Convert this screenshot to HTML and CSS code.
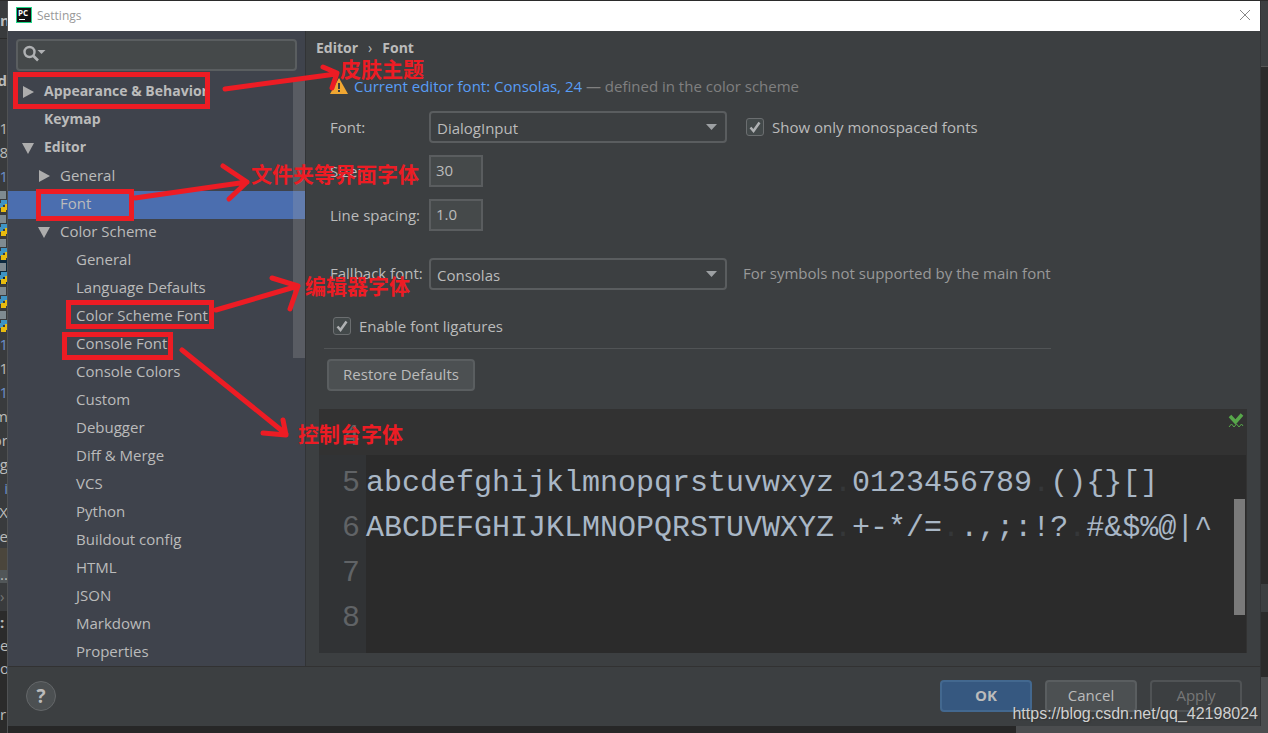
FILE: index.html
```html
<!DOCTYPE html>
<html lang="en">
  <head>
    <meta charset="utf-8">
    <meta name="viewport" content="width=device-width, initial-scale=1.0">
    <title>Settings</title>
    <link rel="stylesheet" href="styles.css">
  </head>

  <body>
    <!-- shared python file icon for the project strip -->
    <svg class="defs" width="0" height="0">
      <symbol id="py" viewBox="0 0 8 24">
        <path d="M0 3h6v8H0z" fill="#7f8b91"/>
        <path d="M1 12h6v5H3v3H0v-5h1z" fill="#3e94c4"/>
        <path d="M8 16v6H6v2H1v-5h4v-3z" fill="#e8bb0e"/>
      </symbol>
    </svg>

    <div class="screen">
      <div class="strip strip-left" aria-hidden="true">
        <div class="strip-top"><b>ne</b></div>
        <div class="strip-head"><b>d</b></div>
        <div class="strip-files">
          <span>1</span>
          <span>8</span>
          <span class="blue">1</span>
          <svg><use href="#py"/></svg>
          <svg><use href="#py"/></svg>
          <svg><use href="#py"/></svg>
          <svg class="current"><use href="#py"/></svg>
          <svg><use href="#py"/></svg>
          <svg><use href="#py"/></svg>
          <span class="blue">1</span>
          <span>1</span>
          <span class="blue">1</span>
          <span>m</span>
          <span>or</span>
          <span>ug</span>
          <span class="blue">i</span>
          <span>X</span>
          <span>re</span>
        </div>
        <div class="strip-lib"></div>
        <div class="strip-dots">..</div>
        <div class="strip-crumb">›</div>
        <div class="strip-console">
          <span><b>:</b></span>
          <span>e</span>
          <span>o</span>
          <span></span>
          <span>r</span>
        </div>
      </div>

      <main class="window">
        <header class="titlebar">
          <svg class="logo" width="16" height="16" viewBox="0 0 16 16">
            <rect width="16" height="16" fill="#21d789"/>
            <rect x="1" y="1" width="14" height="14" fill="#111"/>
            <text x="2" y="9">PC</text>
            <path d="M3 12h6v1H3z" fill="#fff"/>
          </svg>
          <h1>Settings</h1>
          <button class="close" aria-label="Close">
            <svg width="12" height="12" viewBox="0 0 12 12"><path d="M1 1l10 10M11 1L1 11" stroke="#888" fill="none"/></svg>
          </button>
        </header>

        <div class="content">
          <nav class="sidebar">
            <div class="search">
              <svg width="24" height="18" viewBox="0 0 24 18">
                <circle cx="6.500" cy="7" r="5" fill="none" stroke="#afb1b3" stroke-width="2.400"/>
                <path d="M10 10.500l5 5" stroke="#afb1b3" stroke-width="2.600"/>
                <path d="M14.500 5h8l-4 4z" fill="#afb1b3"/>
              </svg>
              <input type="text" aria-label="Search settings">
            </div>
            <ul class="tree">
              <li class="top"><i class="arrow closed"></i>Appearance &amp; Behavior</li>
              <li class="top"><i class="arrow"></i>Keymap</li>
              <li class="top"><i class="arrow open"></i>Editor</li>
              <li class="sub"><i class="arrow closed"></i>General</li>
              <li class="sub selected"><i class="arrow"></i>Font</li>
              <li class="sub"><i class="arrow open"></i>Color Scheme</li>
              <li class="leaf">General</li>
              <li class="leaf">Language Defaults</li>
              <li class="leaf">Color Scheme Font</li>
              <li class="leaf">Console Font</li>
              <li class="leaf">Console Colors</li>
              <li class="leaf">Custom</li>
              <li class="leaf">Debugger</li>
              <li class="leaf">Diff &amp; Merge</li>
              <li class="leaf">VCS</li>
              <li class="leaf">Python</li>
              <li class="leaf">Buildout config</li>
              <li class="leaf">HTML</li>
              <li class="leaf">JSON</li>
              <li class="leaf">Markdown</li>
              <li class="leaf">Properties</li>
            </ul>
            <div class="tree-scroll"></div>
          </nav>

          <section class="page">
            <h2 class="crumbs"><span>Editor</span><span class="sep">›</span><span>Font</span></h2>

            <p class="notice">
              <svg width="18" height="16" viewBox="0 0 18 16">
                <path d="M9 0l9 16H0z" fill="#f0a732"/>
                <path d="M8 5h2v6H8zM8 12h2v2H8z" fill="#3c3f41"/>
              </svg>
              <span><a href="#">Current editor font: Consolas, 24</a> — defined in the color scheme</span>
            </p>

            <form class="settings">
              <div class="fields">
                <label for="font">Font:</label>
                <select id="font"><option>DialogInput</option></select>
                <label class="check mono"><input type="checkbox" checked>Show only monospaced fonts</label>

                <label class="first" for="size">Size:</label>
                <input class="number" id="size" type="text" value="30">

                <label class="first" for="spacing">Line spacing:</label>
                <input class="number" id="spacing" type="text" value="1.0">

                <label class="first fallback" for="fallback">Fallback font:</label>
                <select class="fallback" id="fallback"><option>Consolas</option></select>
                <span class="fallback hint">For symbols not supported by the main font</span>
              </div>
              <label class="check ligatures"><input type="checkbox" checked>Enable font ligatures</label>
              <hr>
              <button type="button" class="btn restore">Restore Defaults</button>
            </form>

            <div class="editor">
              <div class="line active"><span class="num">4</span><code></code></div>
              <div class="line"><span class="num">5</span><code>abcdefghijklmnopqrstuvwxyz<i>.</i>0123456789<i>.</i>(){}[]</code></div>
              <div class="line"><span class="num">6</span><code>ABCDEFGHIJKLMNOPQRSTUVWXYZ<i>.</i>+-*/=<i>.</i>.,;:!?<i>.</i>#&amp;$%@|^</code></div>
              <div class="line"><span class="num">7</span><code></code></div>
              <div class="line last"><span class="num">8</span><code></code></div>
              <svg class="status" width="16" height="16" viewBox="0 0 16 16">
                <path d="M2 3l5.500 6L14 1.500" fill="none" stroke="#57a64a" stroke-width="3.500"/>
                <path d="M1 14l2.500-3 2.500 3 2.500-3 2.500 3 2.500-3 1.500 2" fill="none" stroke="#57a64a"/>
              </svg>
              <div class="editor-scroll"></div>
            </div>
          </section>
        </div>

        <footer class="footer">
          <button class="help" aria-label="Help">?</button>
          <div class="actions">
            <button class="btn primary">OK</button>
            <button class="btn">Cancel</button>
            <button class="btn" disabled>Apply</button>
          </div>
        </footer>
      </main>

      <div class="strip strip-right" aria-hidden="true">
        <div class="panel"></div>
        <div class="tab"></div>
        <div class="corner"></div>
      </div>
      <div class="under" aria-hidden="true"></div>

      <!-- hand drawn notes over the dialog -->
      <svg class="notes" width="520" height="480" viewBox="0 0 520 480">
        <g class="boxes">
          <rect x="15.500" y="74.500" width="192" height="32"/>
          <rect x="38.500" y="191.500" width="93" height="27"/>
          <rect x="68.500" y="302.500" width="143" height="24"/>
          <rect x="64.500" y="334.500" width="106" height="23"/>
        </g>
        <g class="arrows">
          <path d="M225 89L336 74M323 67L337 73L332 88"/>
          <path d="M135 198L247 182M223 166L247 182L229 199"/>
          <path d="M216 310L298 286M272 278L298 286L290 309"/>
          <path d="M182 350L286 434M283 420L286 435L263 433"/>
        </g>
        <text x="340" y="77">皮肤主题</text>
        <text x="251" y="182">文件夹等界面字体</text>
        <text x="305" y="294">编辑器字体</text>
        <text x="298" y="442">控制台字体</text>
      </svg>

      <div class="watermark">https://blog.csdn.net/qq_42198024</div>
    </div>
  </body>
</html>
```
FILE: styles.css
```css
* {
  margin: 0;
  padding: 0;
  box-sizing: border-box;
}

html, body {
  width: 100%;
  height: 100%;
}

body {
  font-family: "Open Sans", "Noto Sans", sans-serif;
  font-size: 15px;
  color: #bbb;
  background: #2b2b2b;
  overflow: hidden;
}

button, input, select {
  font: inherit;
  color: inherit;
}

.defs {
  position: absolute;
}

.screen {
  position: relative;
  display: grid;
  grid-template-columns: 8px 1fr 8px;
  grid-template-rows: 1fr 7px;
  height: 100vh;
  padding-top: 1px;
  background: #2b2b2b;
}

/* what shows of the IDE behind the dialog */

.strip {
  display: flex;
  flex-direction: column;
  overflow: hidden;
  min-height: 0;
}

.strip-left {
  grid-row: 1 / 3;
  background: #393b3d;
  border-right: 1px solid #505254;
}

.strip-top {
  height: 38px;
  line-height: 38px;
  border-bottom: 1px solid #2b2b2b;
}

.strip-head {
  height: 77px;
  line-height: 82px;
  direction: rtl;
}

.strip-files span, .strip-files svg {
  display: block;
  width: 8px;
  height: 24px;
  line-height: 24px;
  direction: rtl;
}

.strip-files .blue {
  color: #6c8fc9;
}

.strip-files .current {
  background: #0d293e;
}

.strip-lib {
  height: 22px;
  background: #4b463c;
}

.strip-dots {
  height: 13px;
  line-height: 9px;
  background: #515658;
}

.strip-crumb {
  height: 28px;
  line-height: 26px;
  color: #777;
}

.strip-console {
  flex: 1;
  background: #2b2b2b;
}

.strip-console span {
  display: block;
  height: 23px;
  line-height: 23px;
}

.strip-right {
  background: #2b2b2b;
  border-left: 1px solid #323436;
}

.strip-right .panel {
  height: 66px;
  background: #3c3f41;
  border-bottom: 1px solid #555;
}

.strip-right .tab {
  height: 28px;
  margin-top: 517px;
  background: #3c3f41;
}

.strip-right .corner {
  flex: 1;
  margin-top: 65px;
  background: #4b4d4f;
}

.under {
  grid-column: 2 / 4;
  background: linear-gradient(90deg, #272727 80%, #4b4d4f 80%);
}

/* dialog */

.window {
  display: flex;
  flex-direction: column;
  min-width: 0;
  min-height: 0;
  background: #3c3f41;
}

.titlebar {
  display: flex;
  align-items: center;
  gap: 5px;
  flex: none;
  height: 30px;
  padding: 0 8px 2px;
  background: #fff;
}

.titlebar h1 {
  flex: 1;
  font-size: 12px;
  font-weight: normal;
  color: #999;
}

.logo text {
  font-size: 8px;
  font-weight: bold;
  fill: #fff;
}

.close {
  display: flex;
  padding: 1px;
  background: none;
  border: 0;
}

.content {
  display: flex;
  flex: 1;
  min-height: 0;
}

.sidebar {
  position: relative;
  display: flex;
  flex-direction: column;
  flex: none;
  width: 298px;
  padding-top: 8px;
  background: #3f434c;
  border-right: 1px solid #323436;
  overflow: hidden;
}

.search {
  display: flex;
  align-items: center;
  flex: none;
  height: 32px;
  margin: 0 8px 8px;
  padding: 0 0 2px 5px;
  background: #45494a;
  border: 2px solid #5a5e60;
  border-radius: 4px;
}

.search input {
  flex: 1;
  min-width: 0;
  background: none;
  border: 0;
  outline: 0;
}

.tree {
  list-style: none;
}

.tree li {
  display: flex;
  align-items: center;
  height: 28px;
  padding-bottom: 4px;
  line-height: 24px;
  white-space: nowrap;
}

.tree .top {
  padding-left: 14px;
  font-size: 14px;
  font-weight: bold;
}

.tree .sub {
  padding-left: 30px;
}

.tree .leaf {
  padding-left: 68px;
}

.tree .selected {
  background: #4b6eaf;
}

.arrow {
  flex: none;
  width: 12px;
  height: 12px;
  margin: 2px 10px 0 0;
}

.closed {
  background: #adadad;
  clip-path: polygon(1px 0, 100% 50%, 1px 100%);
}

.open {
  background: #adadad;
  clip-path: polygon(0 1px, 100% 1px, 50% 100%);
}

.tree-scroll {
  position: absolute;
  top: 47px;
  right: 0;
  width: 12px;
  height: 280px;
  background: rgba(166, 166, 166, 0.25);
}

.page {
  display: flex;
  flex-direction: column;
  flex: 1;
  min-width: 0;
  padding: 5px 13px 13px;
}

.crumbs {
  display: flex;
  gap: 10px;
  margin-left: -3px;
  line-height: 24px;
  font-size: 14px;
}

.crumbs .sep {
  font-weight: normal;
}

.notice {
  display: flex;
  align-items: center;
  gap: 6px;
  margin: 14px 0 13px 11px;
  line-height: 24px;
  color: #808080;
}

.notice a {
  color: #589df6;
  text-decoration: none;
}

.settings {
  width: fit-content;
  padding-left: 5px;
  white-space: nowrap;
}

.fields {
  display: grid;
  grid-template-columns: 99px 298px auto;
  grid-template-rows: 32px 32px 32px 47px;
  row-gap: 12px;
  align-items: center;
  margin-left: 6px;
  line-height: 30px;
}

.first {
  grid-column: 1;
}

.mono, .hint {
  margin-left: 16px;
}

/* last row stands a little apart from the sizes */
.fields .fallback {
  align-self: end;
  height: 32px;
}

.hint {
  color: #999;
}

select {
  width: 100%;
  height: 32px;
  padding: 0 0 2px 6px;
  appearance: none;
  border: 2px solid #5a5d5f;
  border-radius: 4px;
  background: #3c3f41 url("data:image/svg+xml,%3Csvg xmlns='http://www.w3.org/2000/svg' width='11' height='6'%3E%3Cpath d='M0 0h11L5.500 6z' fill='%239da0a3'/%3E%3C/svg%3E") no-repeat right 8px center;
}

.number {
  width: 54px;
  height: 32px;
  padding: 0 5px 2px;
  background: #45494a;
  border: 2px solid #5a5d5f;
}

.check {
  display: flex;
  align-items: center;
  gap: 8px;
}

.check input {
  width: 18px;
  height: 18px;
  margin-left: 3px;
  appearance: none;
  border: 1px solid #6b6e70;
  border-radius: 3px;
  background: #43494a url("data:image/svg+xml,%3Csvg xmlns='http://www.w3.org/2000/svg' width='12' height='12'%3E%3Cpath d='M1.500 6.500l3 3.500L10.500 1.500' fill='none' stroke='%23afb1b3' stroke-width='2.500'/%3E%3C/svg%3E") no-repeat center;
}

.ligatures {
  height: 24px;
  margin: 24px 0 10px 6px;
}

hr {
  border: 0;
  border-top: 1px solid #515456;
}

.btn {
  min-width: 92px;
  height: 32px;
  padding-bottom: 2px;
  background: #4c5052;
  border: 2px solid #5a5e60;
  border-radius: 4px;
}

.restore {
  width: 148px;
  margin: 10px 0 18px 3px;
}

.editor {
  position: relative;
  display: flex;
  flex-direction: column;
  flex: 1;
  background: #2b2b2b;
  border-right: 1px solid #323232;
  font-family: "Courier New", "Liberation Mono", monospace;
  font-size: 30px;
  overflow: hidden;
}

.line {
  display: flex;
  flex: none;
  height: 45px;
  line-height: 36px;
}

.line.active {
  height: 46px;
  background: #323232;
}

.line.last {
  flex: 1;
}

.num {
  flex: none;
  width: 47px;
  padding: 10px 6px 0 0;
  text-align: right;
  color: #606366;
  background: #313335;
}

.active .num {
  background: #323232;
}

.line code {
  padding-top: 10px;
  font-family: inherit;
  color: #a9b7c6;
  white-space: pre;
}

/* visible whitespace dots */
.line i {
  font-style: normal;
  color: #353739;
}

.status {
  position: absolute;
  top: 4px;
  right: 2px;
}

.editor-scroll {
  position: absolute;
  top: 90px;
  right: 1px;
  width: 11px;
  height: 116px;
  background: #7a7a7a;
}

.footer {
  display: flex;
  align-items: center;
  justify-content: space-between;
  flex: none;
  height: 60px;
  padding: 0 18px 1px;
  border-top: 1px solid #323232;
}

.help {
  width: 30px;
  height: 30px;
  border: 1px solid #646769;
  border-radius: 50%;
  background: #4c5052;
  font-size: 19px;
  line-height: 26px;
  font-weight: bold;
}

.actions {
  display: flex;
  gap: 13px;
}

.primary {
  background: #365880;
  border-color: #43688f;
  font-weight: bold;
}

.btn:disabled {
  background: none;
  border-color: #505355;
  color: #777;
}

.notes {
  position: absolute;
  top: 0;
  left: 0;
  pointer-events: none;
}

.notes text {
  font: bold 21px "Noto Sans CJK SC", sans-serif;
  fill: #ed1c24;
}

.boxes, .arrows {
  fill: none;
  stroke: #ed1c24;
  stroke-width: 5;
}

.arrows {
  stroke-linecap: round;
  stroke-linejoin: round;
}

.watermark {
  position: absolute;
  right: 10px;
  bottom: 9px;
  font: 16px/20px "Liberation Sans", Arial, sans-serif;
  color: #d0d0d0;
  text-shadow: 1px 1px 1px #333;
}
```
